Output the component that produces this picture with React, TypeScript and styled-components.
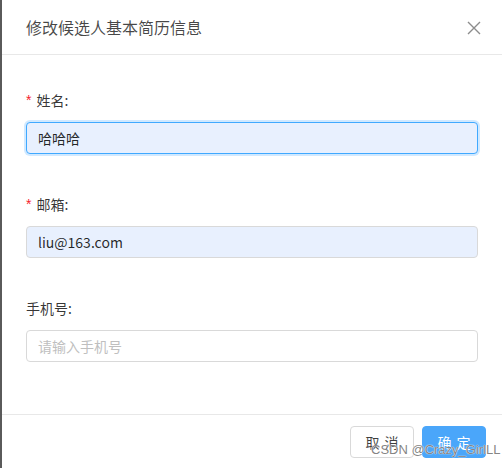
import styled, { createGlobalStyle } from 'styled-components';

const GlobalStyle = createGlobalStyle`
  html, body {
    margin: 0;
    padding: 0;
    background: #ffffff;
  }
  body {
    font-family: "Noto Sans CJK SC", "Liberation Sans", sans-serif;
  }
`;

const Page = styled.div`
  position: relative;
  width: 502px;
  height: 468px;
  overflow: hidden;
  background: #ffffff;
  border-left: 2px solid #5a5a5a;
  box-sizing: border-box;
`;

const Header = styled.div`
  height: 55px;
  display: flex;
  align-items: center;
  justify-content: space-between;
  padding: 0 20px 0 24px;
  border-bottom: 1px solid #e8e8e8;
  box-sizing: border-box;
`;

const Title = styled.div`
  font-size: 16px;
  color: rgba(0, 0, 0, 0.72);
  line-height: 22px;
`;

const CloseButton = styled.button`
  width: 16px;
  height: 16px;
  padding: 0;
  border: none;
  background: none;
  display: flex;
  align-items: center;
  justify-content: center;
  margin-top: 2px;
`;

const Body = styled.div`
  padding: 35px 24px 0 24px;
  height: 360px;
  box-sizing: border-box;
  border-bottom: 1px solid #e8e8e8;
`;

const Field = styled.div`
  margin-bottom: 40px;
`;

const Label = styled.div`
  font-size: 14px;
  color: rgba(0, 0, 0, 0.8);
  line-height: 20px;
  margin-bottom: 12px;
  display: flex;
  align-items: center;
`;

const Star = styled.span`
  color: #f5222d;
  margin-right: 5px;
  font-family: SimSun, "Liberation Sans", sans-serif;
  font-size: 14px;
`;

const Input = styled.input<{ $filled?: boolean; $focused?: boolean }>`
  width: 452px;
  height: 32px;
  box-sizing: border-box;
  padding: 4px 11px;
  font-family: "Noto Sans CJK SC", "Liberation Sans", sans-serif;
  font-size: 14px;
  color: rgba(0, 0, 0, 0.85);
  border-radius: 4px;
  border: 1px solid ${(p) => (p.$focused ? '#40a9ff' : '#d9d9d9')};
  background: ${(p) => (p.$filled ? '#e8f0fe' : '#ffffff')};
  box-shadow: ${(p) => (p.$focused ? '0 0 0 2px rgba(24, 144, 255, 0.2)' : 'none')};
  outline: none;
  &::placeholder {
    color: #bfbfbf;
  }
`;

const Footer = styled.div`
  display: flex;
  justify-content: flex-end;
  gap: 8px;
  padding: 11px 16px 0 0;
`;

const Button = styled.button<{ $primary?: boolean }>`
  height: 32px;
  width: 64px;
  border-radius: 4px;
  font-family: "Noto Sans CJK SC", "Liberation Sans", sans-serif;
  font-size: 14px;
  letter-spacing: 5px;
  text-indent: 5px;
  border: 1px solid ${(p) => (p.$primary ? '#4aa6fa' : '#d9d9d9')};
  background: ${(p) => (p.$primary ? '#4aa6fa' : '#ffffff')};
  color: ${(p) => (p.$primary ? '#ffffff' : 'rgba(0, 0, 0, 0.75)')};
  padding: 0;
`;

const Watermark = styled.div`
  position: absolute;
  left: 369px;
  top: 442px;
  font-family: "Liberation Sans", sans-serif;
  font-size: 13px;
  color: rgba(100, 100, 100, 0.8);
  text-shadow: 0 0 1px #ffffff, 0 0 1px #ffffff;
  white-space: nowrap;
`;

export default function App() {
  return (
    <Page>
      <GlobalStyle />
      <Header>
        <Title>修改候选人基本简历信息</Title>
        <CloseButton type="button" aria-label="close">
          <svg width="14" height="14" viewBox="0 0 14 14">
            <path
              d="M1 1 L13 13 M13 1 L1 13"
              stroke="#8c8c8c"
              strokeWidth="1.4"
              fill="none"
            />
          </svg>
        </CloseButton>
      </Header>
      <Body>
        <Field>
          <Label>
            <Star>*</Star>姓名:
          </Label>
          <Input $filled $focused defaultValue="哈哈哈" />
        </Field>
        <Field>
          <Label>
            <Star>*</Star>邮箱:
          </Label>
          <Input $filled defaultValue="liu@163.com" />
        </Field>
        <Field>
          <Label>手机号:</Label>
          <Input placeholder="请输入手机号" />
        </Field>
      </Body>
      <Footer>
        <Button type="button">取消</Button>
        <Button type="button" $primary>
          确定
        </Button>
      </Footer>
      <Watermark>CSDN @Crazy_GirlLL</Watermark>
    </Page>
  );
}
